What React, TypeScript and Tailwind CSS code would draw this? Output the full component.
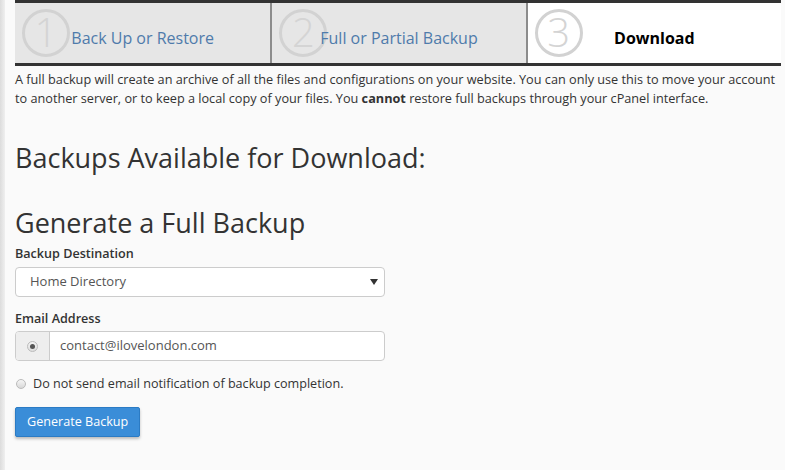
import React from "react";

function StepCircle({ n }: { n: string }) {
  return (
    <div className="absolute left-[7px] top-1/2 -translate-y-1/2 w-[48px] h-[48px] rounded-full border-[3px] border-[#d2d2d2] flex items-center justify-center text-[40px] leading-none font-light text-[#d4d4d4] select-none">
      <span className="-mt-[2px]">{n}</span>
    </div>
  );
}

export default function App() {
  return (
    <div className="w-[785px] h-[470px] overflow-hidden bg-[#fafafa] flex font-['Open_Sans',_'Liberation_Sans',_sans-serif] text-[#333]">
      <div className="w-[5px] shrink-0 bg-gradient-to-r from-[#dcdcdc] to-[#efefef]" />
      <div className="flex-1 pl-[10px] pr-[4px]">
        <div className="grid grid-cols-3 h-[66px] border-y-[3px] border-[#333]">
          <div className="relative bg-[#e6e6e6] flex items-center justify-center">
            <StepCircle n="1" />
            <span className="relative mt-[10px] text-[16px] text-[#4f7bab]">Back Up or Restore</span>
          </div>
          <div className="relative bg-[#e6e6e6] border-l-2 border-[#8c8c8c] flex items-center justify-center">
            <StepCircle n="2" />
            <span className="relative mt-[10px] text-[16px] text-[#4f7bab]">Full or Partial Backup</span>
          </div>
          <div className="relative bg-white border-l-2 border-[#8c8c8c] flex items-center justify-center">
            <StepCircle n="3" />
            <span className="relative mt-[10px] text-[16px] font-bold text-black">Download</span>
          </div>
        </div>

        <p className="mt-[4px] text-[12.7px] leading-[19px] text-[#333]">
          A full backup will create an archive of all the files and configurations on your website. You can only use this to move your account to another server, or to keep a local copy of your files. You <b>cannot</b> restore full backups through your cPanel interface.
        </p>

        <h2 className="mt-[33px] text-[27px] leading-[34px] text-[#333]">Backups Available for Download:</h2>

        <h2 className="mt-[31px] text-[27px] leading-[34px] text-[#333]">Generate a Full Backup</h2>

        <div className="mt-[5px] text-[12.6px] font-semibold leading-[18px]">Backup Destination</div>
        <div className="mt-[4px] w-[370px] h-[30px] bg-white border border-[#ccc] rounded-[4px] flex items-center justify-between pl-[14px] pr-[6px]">
          <span className="text-[13px] text-[#555]">Home Directory</span>
          <svg width="8" height="6" viewBox="0 0 8 6"><path d="M0 0 L8 0 L4 6 Z" fill="#333" /></svg>
        </div>

        <div className="mt-[13px] text-[12.6px] font-semibold leading-[18px]">Email Address</div>
        <div className="mt-[3px] w-[370px] h-[30px] bg-white border border-[#ccc] rounded-[4px] flex overflow-hidden">
          <div className="w-[34px] shrink-0 bg-[#eee] border-r border-[#ccc] flex items-center justify-center">
            <span className="w-[11px] h-[11px] rounded-full border border-[#bbb] bg-gradient-to-b from-[#f4f4f4] to-[#ddd] flex items-center justify-center">
              <span className="w-[5px] h-[5px] rounded-full bg-[#555]" />
            </span>
          </div>
          <div className="flex items-center pl-[10px] text-[13px] text-[#555]">contact@ilovelondon.com</div>
        </div>

        <div className="mt-[14px] flex items-center gap-[7px]">
          <span className="ml-[1px] w-[10px] h-[10px] rounded-full border border-[#bbb] bg-gradient-to-b from-[#f6f6f6] to-[#d8d8d8]" />
          <span className="text-[12.6px] leading-[18px] text-[#333]">Do not send email notification of backup completion.</span>
        </div>

        <button className="mt-[14px] h-[30px] px-[11px] bg-[#3a8dd8] border border-[#2b7bc4] rounded-[2px] text-white text-[12.6px] shadow-[0_2px_3px_rgba(0,0,0,0.25)]">
          Generate Backup
        </button>
      </div>
    </div>
  );
}
